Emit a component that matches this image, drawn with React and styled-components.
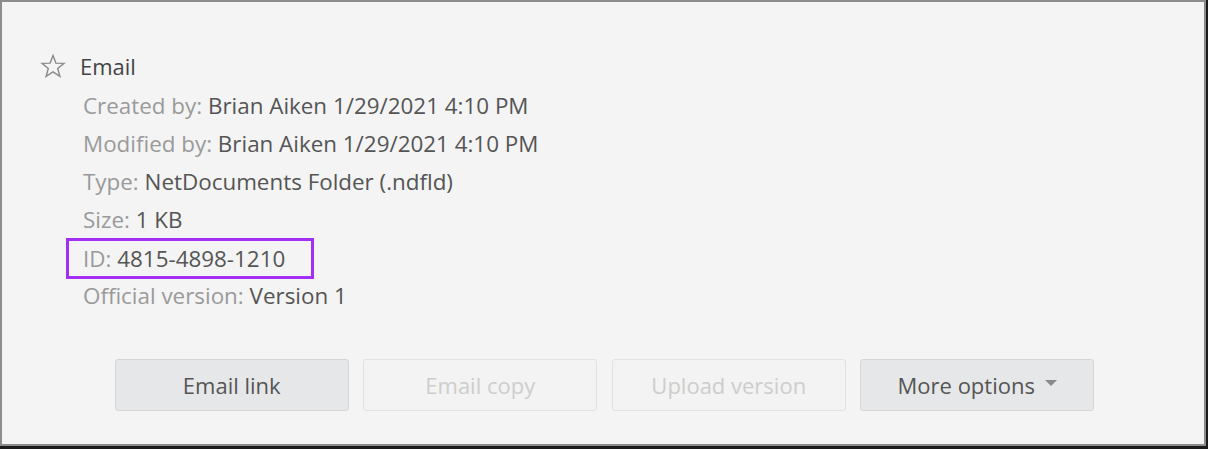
import React from 'react';
import styled, { createGlobalStyle } from 'styled-components';

const Global = createGlobalStyle`
  html, body {
    margin: 0;
    padding: 0;
    background: #1c1c1c;
  }
  body {
    font-family: 'Open Sans', 'Noto Sans', sans-serif;
  }
`;

const Panel = styled.div`
  box-sizing: border-box;
  width: 1206px;
  height: 446px;
  background: #f4f4f4;
  border: 2px solid #8c8c8c;
  padding: 45px 38px 0 38px;
  display: flex;
  flex-direction: column;
`;

const Header = styled.div`
  display: flex;
  align-items: center;
  gap: 14px;
  height: 38px;
  font-size: 22px;
  color: #444;
`;

const StarIcon = () => (
  <svg width="26" height="24" viewBox="0 0 26 24" fill="none">
    <path
      d="M13 1.5 L15.9 9.1 L24 9.4 L17.7 14.4 L19.9 22.3 L13 17.8 L6.1 22.3 L8.3 14.4 L2 9.4 L10.1 9.1 Z"
      stroke="#8a8a8a"
      strokeWidth="1.4"
      strokeLinejoin="miter"
    />
  </svg>
);

const Details = styled.div`
  display: flex;
  flex-direction: column;
  margin-left: 26px;
  margin-top: 2px;
`;

const Row = styled.div`
  box-sizing: border-box;
  width: fit-content;
  font-size: 22.4px;
  line-height: 38px;
  height: 38px;
  padding-left: 17px;
  white-space: nowrap;
  ${(p) =>
    p.$highlight &&
    `
    border: 3px solid #a32ff5;
    line-height: 35px;
    height: 41px;
    margin: -1.5px 0;
    padding: 0 26px 0 14px;
  `}
`;

const Label = styled.span`
  color: #9a9a9a;
`;

const Value = styled.span`
  color: #555;
`;

const Actions = styled.div`
  display: flex;
  justify-content: center;
  gap: 14.5px;
  margin-top: 44px;
  padding-left: 3px;
`;

const Button = styled.button`
  box-sizing: border-box;
  width: 234px;
  height: 52px;
  border-radius: 3px;
  font-family: 'Open Sans', 'Noto Sans', sans-serif;
  font-size: 22px;
  display: flex;
  align-items: center;
  justify-content: center;
  gap: 10px;
  padding: 0;
  background: ${(p) => (p.disabled ? '#f3f3f3' : '#e6e7e8')};
  border: 1px solid ${(p) => (p.disabled ? '#e1e1e1' : '#d5d6d7')};
  color: ${(p) => (p.disabled ? '#cdcdcd' : '#555')};
`;

const Caret = styled.span`
  width: 0;
  height: 0;
  border-left: 6px solid transparent;
  border-right: 6px solid transparent;
  border-top: 6px solid #8a8a8a;
  margin-top: -4px;
`;

const rows = [
  ['Created by:', 'Brian Aiken 1/29/2021 4:10 PM'],
  ['Modified by:', 'Brian Aiken 1/29/2021 4:10 PM'],
  ['Type:', 'NetDocuments Folder (.ndfld)'],
  ['Size:', '1 KB'],
  ['ID:', '4815-4898-1210', true],
  ['Official version:', 'Version 1'],
];

const App = () => (
  <>
    <Global />
    <Panel>
      <Header>
        <StarIcon />
        <span>Email</span>
      </Header>
      <Details>
        {rows.map(([label, value, hl]) => (
          <Row key={label} $highlight={hl}>
            <Label>{label}</Label> <Value>{value}</Value>
          </Row>
        ))}
      </Details>
      <Actions>
        <Button>Email link</Button>
        <Button disabled>Email copy</Button>
        <Button disabled>Upload version</Button>
        <Button>
          More options
          <Caret />
        </Button>
      </Actions>
    </Panel>
  </>
);

export default App;
